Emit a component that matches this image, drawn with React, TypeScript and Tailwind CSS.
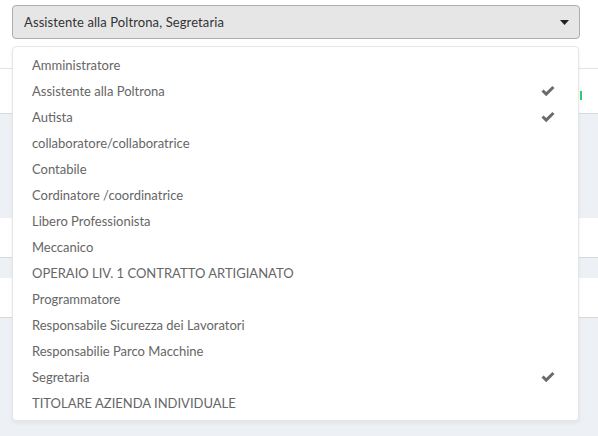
import React from "react";

const items: { label: string; checked?: boolean }[] = [
  { label: "Amministratore" },
  { label: "Assistente alla Poltrona", checked: true },
  { label: "Autista", checked: true },
  { label: "collaboratore/collaboratrice" },
  { label: "Contabile" },
  { label: "Cordinatore /coordinatrice" },
  { label: "Libero Professionista" },
  { label: "Meccanico" },
  { label: "OPERAIO LIV. 1 CONTRATTO ARTIGIANATO" },
  { label: "Programmatore" },
  { label: "Responsabile Sicurezza dei Lavoratori" },
  { label: "Responsabilie Parco Macchine" },
  { label: "Segretaria", checked: true },
  { label: "TITOLARE AZIENDA INDIVIDUALE" },
];

function Check() {
  return (
    <svg width="14" height="12" viewBox="0 0 14 12" className="block">
      <path d="M0.5 6.6 L2.6 4.5 L5.2 7.1 L11.4 0.9 L13.5 3 L5.2 11.3 Z" fill="#6b6b6b" />
    </svg>
  );
}

export default function App() {
  return (
    <div
      className="relative w-[598px] h-[436px] overflow-hidden bg-[#edf0f4]"
      style={{ fontFamily: "Lato, 'Open Sans', sans-serif" }}
    >
      {/* background page */}
      <div className="flex flex-col">
        <div className="h-[69px] bg-white border-b border-[#e2e2e2]" />
        <div className="h-[45px] bg-white border-b border-[#dadada] flex justify-end">
          <div className="w-[2px] h-[9px] mt-[22px] mr-[16px] bg-[#2ecc71]" />
        </div>
        <div className="h-[104px] bg-[#edf0f4]" />
        <div className="h-[40px] bg-white border-b border-[#d8d8d8]" />
        <div className="h-[20px] bg-[#edf0f4]" />
        <div className="h-[40px] bg-white border-b border-[#d8d8d8]" />
      </div>

      {/* select button */}
      <div className="absolute left-[12px] top-[5px] w-[568px] h-[34px] rounded-[4px] border border-[#adadad] bg-[#e6e6e6] flex items-center pl-[11px] pr-[9px] text-[13px] text-[#333]">
        <span className="flex-1 pt-[1px] tracking-[0.1px]">Assistente alla Poltrona, Segretaria</span>
        <svg width="9" height="5" viewBox="0 0 9 5" className="mr-[1px]">
          <path d="M0 0 L9 0 L4.5 5 Z" fill="#222" />
        </svg>
      </div>

      {/* dropdown menu */}
      <div className="absolute left-[12px] top-[46px] w-[567px] h-[375px] rounded-[4px] border border-[#e6e6e6] bg-white shadow-[0_2px_4px_rgba(0,0,0,0.06)] pt-[5px]">
        {items.map((it) => (
          <div
            key={it.label}
            className="h-[26px] flex items-center pl-[19px] pr-[23px] text-[13px] text-[#666]"
          >
            <span className="flex-1 pt-[1px]">{it.label}</span>
            {it.checked && <Check />}
          </div>
        ))}
      </div>
    </div>
  );
}
